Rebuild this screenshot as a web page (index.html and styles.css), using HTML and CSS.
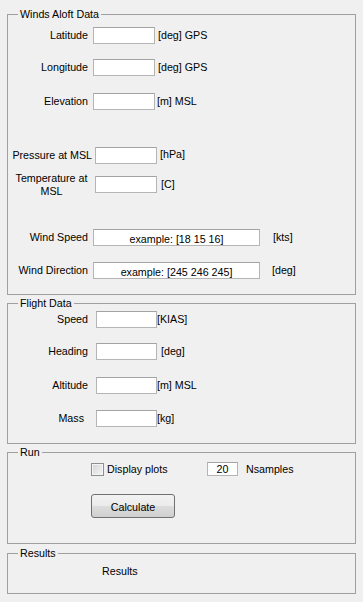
FILE: index.html
```html
<!DOCTYPE html>
<html lang="en">
<head>
    <meta charset="UTF-8">
    <meta name="viewport" content="width=device-width, initial-scale=1.0">
    <title>Winds Aloft</title>
    <link rel="stylesheet" href="styles.css">
</head>
<body>
    <div class="window">
        <fieldset class="panel winds">
            <legend>Winds Aloft Data</legend>
            <div class="row r-lat">
                <label class="lbl">Latitude</label>
                <input class="edit" type="text">
                <span class="unit">[deg] GPS</span>
            </div>
            <div class="row r-lon">
                <label class="lbl">Longitude</label>
                <input class="edit" type="text">
                <span class="unit">[deg] GPS</span>
            </div>
            <div class="row r-elev">
                <label class="lbl">Elevation</label>
                <input class="edit" type="text">
                <span class="unit u-tight">[m] MSL</span>
            </div>
            <div class="row r-press">
                <label class="lbl lbl-wide">Pressure at MSL</label>
                <input class="edit" type="text">
                <span class="unit u-up">[hPa]</span>
            </div>
            <div class="row r-temp">
                <label class="lbl lbl-center">Temperature at<br>MSL</label>
                <input class="edit" type="text">
                <span class="unit u-far">[C]</span>
            </div>
            <div class="row r-wspd">
                <label class="lbl">Wind Speed</label>
                <input class="edit edit-long" type="text" value="example: [18 15 16]">
                <span class="unit u-kts">[kts]</span>
            </div>
            <div class="row r-wdir">
                <label class="lbl">Wind Direction</label>
                <input class="edit edit-long" type="text" value="example: [245 246 245]">
                <span class="unit u-deg">[deg]</span>
            </div>
        </fieldset>

        <fieldset class="panel flight">
            <legend>Flight Data</legend>
            <div class="row r-spd">
                <label class="lbl">Speed</label>
                <input class="edit" type="text">
                <span class="unit u-none">[KIAS]</span>
            </div>
            <div class="row r-hdg">
                <label class="lbl">Heading</label>
                <input class="edit" type="text">
                <span class="unit u-far">[deg]</span>
            </div>
            <div class="row r-alt">
                <label class="lbl">Altitude</label>
                <input class="edit" type="text">
                <span class="unit u-none">[m] MSL</span>
            </div>
            <div class="row r-mass">
                <label class="lbl lbl-mass">Mass</label>
                <input class="edit" type="text">
                <span class="unit u-none">[kg]</span>
            </div>
        </fieldset>

        <fieldset class="panel run">
            <legend>Run</legend>
            <div class="run-row">
                <input type="checkbox" id="plots" class="check">
                <label for="plots" class="check-label">Display plots</label>
                <input class="edit edit-small" type="text" value="20">
                <span class="nsamples">Nsamples</span>
            </div>
            <button type="button" class="btn">Calculate</button>
        </fieldset>

        <fieldset class="panel results">
            <legend>Results</legend>
            <div class="results-text">Results</div>
        </fieldset>
    </div>
</body>
</html>
```

FILE: styles.css
```css
body {
    margin: 0;
    background-color: #f0f0f0;
    font-family: "Liberation Sans", Arial, sans-serif;
    font-size: 10.7px;
    line-height: 13px;
    color: #000;
}
.window {
    padding: 8px 7px 0 7px;
}
.panel {
    margin: 0;
    padding: 0;
    min-inline-size: 0;
    border: 1px solid #a0a0a0;
}
.panel legend {
    margin-left: 10px;
    padding: 0 2px;
    line-height: 13px;
}
.winds {
    padding-bottom: 15px;
}
.flight {
    margin-top: 2px;
    padding-bottom: 16px;
}
.run {
    margin-top: 2px;
    padding-bottom: 25px;
}
.results {
    margin-top: 3px;
    padding-bottom: 15px;
}

/* label / edit / unit rows */
.row {
    display: flex;
    align-items: center;
    height: 17px;
}
.lbl {
    width: 80px;
    margin-right: 5px;
    text-align: right;
    white-space: nowrap;
}
.lbl-wide {
    width: 84px;
    margin-right: 3px;
}
.lbl-center {
    width: 87px;
    margin-right: 0;
    text-align: center;
}
.edit {
    box-sizing: border-box;
    width: 62px;
    height: 17px;
    margin: 0;
    padding: 0 2px;
    border: 1px solid #b5b5b5;
    border-top-color: #a3a3a3;
    background-color: #fff;
    font-family: inherit;
    font-size: 10.7px;
    line-height: 13px;
    color: #000;
    outline: none;
}
.edit-long {
    width: 167px;
    padding-top: 3px;
    text-align: center;
}
.unit {
    margin-left: 3px;
    white-space: nowrap;
}
.u-tight { margin-left: 2px; }
.u-far { margin-left: 4px; }
.u-up { position: relative; top: -1px; }
.u-kts { margin-left: 13px; }
.u-deg { margin-left: 12px; }
.u-none { margin-left: 0; }

.r-lat { margin-top: 6px; }
.r-lon { margin-top: 15px; }
.r-elev { margin-top: 17px; }
.r-press { margin-top: 37px; }
.r-temp { margin-top: 12px; }
.r-wspd { margin-top: 36px; }
.r-wdir { margin-top: 16px; }

.flight .lbl {
    margin-right: 8px;
}
.flight .edit {
    width: 61px;
}
.lbl-mass {
    padding-right: 4px;
    box-sizing: border-box;
}
.r-spd { margin-top: 1px; }
.r-hdg { margin-top: 15px; }
.r-alt { margin-top: 17px; }
.r-mass { margin-top: 16px; }

/* run panel */
.run-row {
    display: flex;
    align-items: center;
    height: 14px;
    margin-top: 3px;
    padding-left: 83px;
}
.check {
    appearance: none;
    -webkit-appearance: none;
    box-sizing: border-box;
    width: 13px;
    height: 13px;
    margin: 0 3px 0 0;
    border: 1px solid #8e8f8f;
    background: linear-gradient(135deg, #d4d4d4, #f6f6f6);
    box-shadow: inset 0 0 0 1px #f4f4f4;
}
.check-label {
    width: 100px;
}
.edit-small {
    width: 31px;
    height: 14px;
    padding: 0;
    line-height: 12px;
    text-align: center;
}
.nsamples {
    margin-left: 8px;
}
.btn {
    display: block;
    box-sizing: border-box;
    width: 84px;
    height: 24px;
    margin: 18px 0 0 83px;
    padding: 2px 0 0 0;
    border: 1px solid #707070;
    border-radius: 3px;
    background: linear-gradient(#f2f2f2 0%, #ebebeb 50%, #dddddd 51%, #cfcfcf 100%);
    font-family: inherit;
    font-size: 10.7px;
    color: #000;
    cursor: pointer;
}

.results-text {
    margin-top: 5px;
    padding-left: 94px;
}
```
